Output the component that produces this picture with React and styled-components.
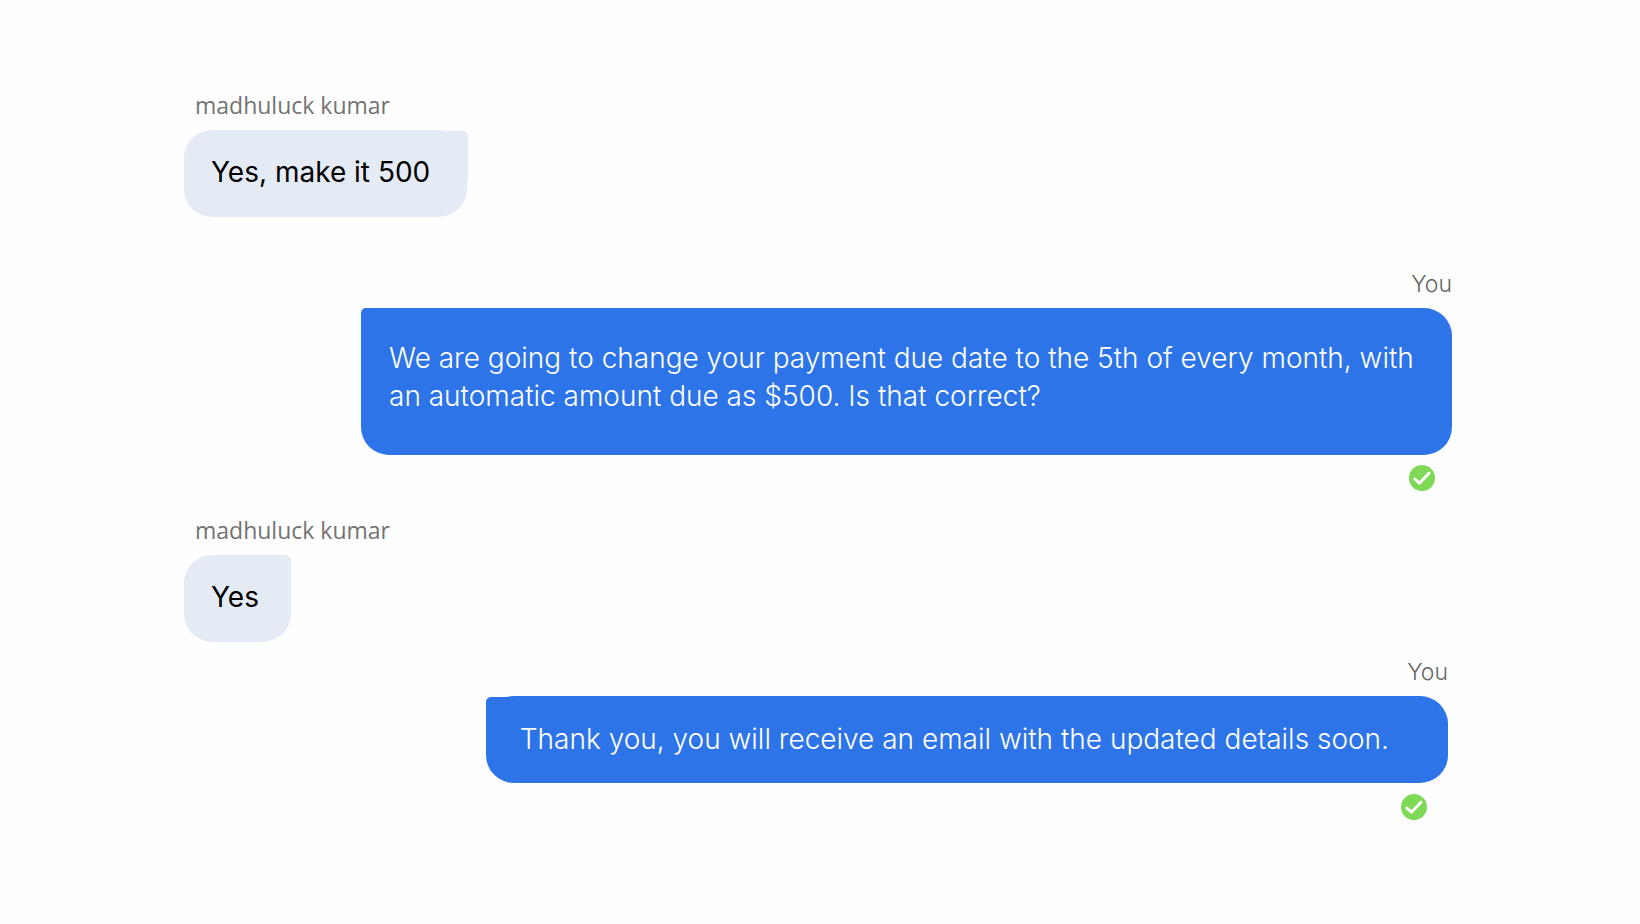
import React from "react";
import styled, { createGlobalStyle, css } from "styled-components";

const GlobalStyle = createGlobalStyle`
  *, *::before, *::after { box-sizing: border-box; }
  body { margin: 0; background: #fefefe; font-family: Inter, "Liberation Sans", sans-serif; }
`;

const Thread = styled.main`
  display: flex;
  flex-direction: column;
  padding: 92px 188px 100px 184px;
`;

const Message = styled.article`
  display: flex;
  flex-direction: column;
  align-items: ${(p) => (p.$own ? "flex-end" : "flex-start")};
  margin-top: ${(p) => p.$gap || 0}px;
  padding-right: ${(p) => (p.$inset ? 4 : 0)}px;
`;

const Sender = styled.h2`
  margin: 0;
  height: 38px;
  font-size: 23px;
  line-height: 28px;
  font-weight: 300;
  color: #666666;
  ${(p) =>
    !p.$own &&
    css`
      padding-left: 11px;
      font-family: "Open Sans", "Noto Sans", sans-serif;
      font-weight: 400;
      line-height: 26px;
      color: #737373;
    `}
`;

const Bubble = styled.p`
  position: relative;
  margin: 0;
  max-width: 1091px;
  padding-top: ${(p) => (p.$tall ? 31 : p.$own ? 24 : 23)}px;
  padding-bottom: ${(p) => (p.$tall ? 40 : p.$own ? 25 : 26)}px;
  padding-right: ${(p) => p.$end}px;
  padding-left: ${(p) => p.$start}px;
  border-radius: ${(p) => (p.$own ? "5px 28px 28px 28px" : "28px 5px 28px 28px")};
  background: ${(p) => (p.$own ? "#2d74e9" : "#e5ebf4")};
  color: ${(p) => (p.$own ? "#ffffff" : "#000000")};
  font-size: 28px;
  line-height: 38px;
  font-weight: ${(p) => (p.$own ? 300 : 400)};

  ${(p) =>
    p.$tab &&
    css`
      border-radius: 28px;

      &::before {
        content: "";
        position: absolute;
        z-index: -1;
        top: 1px;
        ${p.$own ? "left: 0;" : "right: -1px;"}
        width: 28px;
        height: 50px;
        border-radius: 5px 5px 0 0;
        background: inherit;
      }
    `}
`;

const Status = styled.svg`
  display: block;
  width: 26px;
  height: 26px;
  margin: ${(p) => (p.$inset ? 11 : 10)}px ${(p) => (p.$inset ? 21 : 17)}px 0 0;
`;

function Delivered({ $inset }) {
  return (
    <Status $inset={$inset} viewBox="0 0 26 26" role="img" aria-label="Delivered">
      <circle cx="13" cy="13" r="13" fill="#7ed957" />
      <path d="M5.8 14 L10.4 18.2 L20 8.2" fill="none" stroke="#fff" strokeWidth="3" strokeLinecap="round" strokeLinejoin="round" />
    </Status>
  );
}

export default function App() {
  return (
    <>
      <GlobalStyle />
      <Thread>
        <Message>
          <Sender>madhuluck kumar</Sender>
          <Bubble $tab $start={27} $end={37}>Yes, make it 500</Bubble>
        </Message>
        <Message $own $gap={53}>
          <Sender $own>You</Sender>
          <Bubble $own $tall $start={28} $end={28}>
            We are going to change your payment due date to the 5th of every month, with an automatic amount due as $500. Is that correct?
          </Bubble>
          <Delivered />
        </Message>
        <Message $gap={26}>
          <Sender>madhuluck kumar</Sender>
          <Bubble $start={27} $end={32}>Yes</Bubble>
        </Message>
        <Message $own $inset $gap={16}>
          <Sender $own>You</Sender>
          <Bubble $own $tab $start={34} $end={59}>
            Thank you, you will receive an email with the updated details soon.
          </Bubble>
          <Delivered $inset />
        </Message>
      </Thread>
    </>
  );
}
